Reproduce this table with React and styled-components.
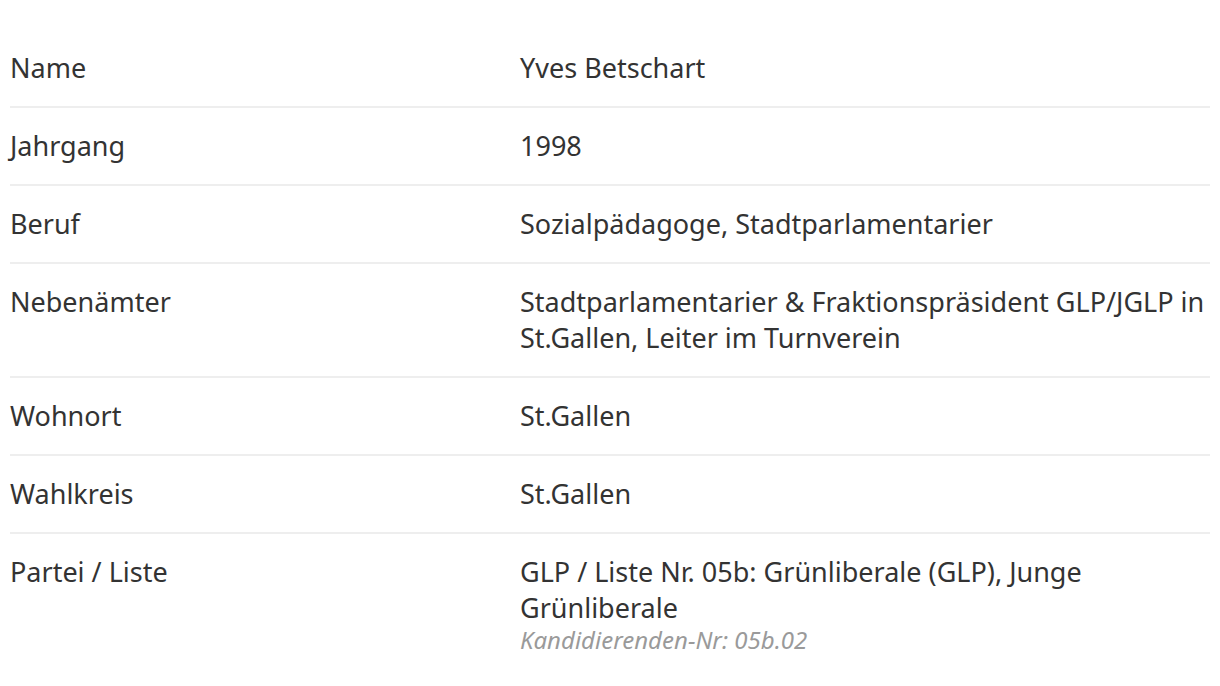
import React from 'react';
import styled, { createGlobalStyle } from 'styled-components';

const GlobalStyle = createGlobalStyle`
  body {
    margin: 0;
    background: #ffffff;
    font-family: "Noto Sans", "Open Sans", Arial, sans-serif;
    color: #333333;
  }
`;

const rows = [
  { label: 'Name', value: 'Yves Betschart' },
  { label: 'Jahrgang', value: '1998' },
  { label: 'Beruf', value: 'Sozialpädagoge, Stadtparlamentarier' },
  {
    label: 'Nebenämter',
    value:
      'Stadtparlamentarier & Fraktionspräsident GLP/JGLP in St.Gallen, Leiter im Turnverein',
  },
  { label: 'Wohnort', value: 'St.Gallen' },
  { label: 'Wahlkreis', value: 'St.Gallen' },
  {
    label: 'Partei / Liste',
    value: 'GLP / Liste Nr. 05b: Grünliberale (GLP), Junge Grünliberale',
    note: 'Kandidierenden-Nr: 05b.02',
  },
];

const App = () => {
  return (
    <>
      <GlobalStyle />
      <Page>
        <Table>
          {rows.map((row, i) => (
            <Row key={row.label} last={i === rows.length - 1}>
              <Label>{row.label}</Label>
              <Value>
                {row.value}
                {row.note && <Note>{row.note}</Note>}
              </Value>
            </Row>
          ))}
        </Table>
      </Page>
    </>
  );
};

export default App;

const Page = styled.div`
  padding: 30px 10px 0;
`;

const Table = styled.div`
  display: flex;
  flex-direction: column;
`;

const Row = styled.div`
  display: grid;
  grid-template-columns: 510px 1fr;
  padding: 20px 0;
  border-bottom: ${({ last }) => (last ? 'none' : '2px solid #eeeeee')};
  font-size: 27px;
  line-height: 36px;
`;

const Label = styled.div`
  color: #333333;
`;

const Value = styled.div`
  color: #333333;
`;

const Note = styled.div`
  font-size: 24px;
  line-height: 28px;
  font-style: italic;
  color: #9a9a9a;
`;
